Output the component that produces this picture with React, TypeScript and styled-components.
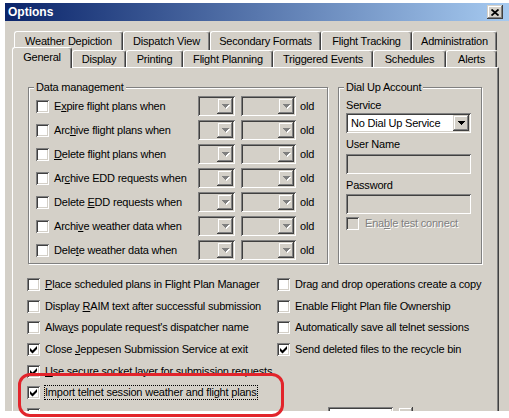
import React from 'react';
import styled, { createGlobalStyle, css } from 'styled-components';

const FACE = '#d4d0c8';

const raised = css`
  box-shadow: inset -1px -1px #404040, inset 1px 1px ${FACE}, inset -2px -2px #808080, inset 2px 2px #fff;
`;
const sunken = css`
  box-shadow: inset 1px 1px #808080, inset -1px -1px #fff, inset 2px 2px #404040, inset -2px -2px ${FACE};
`;

const BACK_TABS = [
  { label: 'Weather Depiction', width: 109 },
  { label: 'Dispatch View', width: 87 },
  { label: 'Secondary Formats', width: 111 },
  { label: 'Flight Tracking', width: 91 },
  { label: 'Administration', width: 85 },
];

const FRONT_TABS = [
  { label: 'General', width: 60, active: true },
  { label: 'Display', width: 54 },
  { label: 'Printing', width: 57 },
  { label: 'Flight Planning', width: 90 },
  { label: 'Triggered Events', width: 100 },
  { label: 'Schedules', width: 73 },
  { label: 'Alerts', width: 51 },
];

// '&' marks the accelerator letter, as in a Windows resource file
const DATA_ROWS = [
  'E&xpire flight plans when',
  'Arc&hive flight plans when',
  '&Delete flight plans when',
  'Ar&chive EDD requests when',
  'Delete &EDD requests when',
  'Archi&ve weather data when',
  'Dele&te weather data when',
];

type Opt = { label: string; checked?: boolean; focus?: boolean } | null;

const OPTIONS: [Opt, Opt][] = [
  [{ label: '&Place scheduled plans in Flight Plan Manager' }, { label: 'Drag and drop operations create a copy' }],
  [{ label: 'Display &RAIM text after successful submission' }, { label: 'Enable Flight Plan file Ownership' }],
  [{ label: "Alwa&ys populate request's dispatcher name" }, { label: 'Automatically save all telnet sessions' }],
  [{ label: 'Close &Jeppesen Submission Service at exit', checked: true }, { label: 'Send deleted files to the recycle bin', checked: true }],
  [{ label: '&Use secure socket layer for submission requests', checked: true }, null],
  [{ label: 'Import telnet session weather and flight plans', checked: true, focus: true }, null],
];

const Accel = ({ text }: { text: string }) => {
  const i = text.indexOf('&');
  if (i < 0) return <>{text}</>;
  return (
    <>
      {text.slice(0, i)}
      <u>{text[i + 1]}</u>
      {text.slice(i + 2)}
    </>
  );
};

const Arrow = ({ disabled }: { disabled?: boolean }) => {
  const d = 'M0 0h7v1H0z M1 1h5v1H1z M2 2h3v1H2z M3 3h1v1H3z';
  return (
    <svg width="8" height="5" viewBox="0 0 8 5">
      {disabled && <path d={d} fill="#fff" transform="translate(1 1)" />}
      <path d={d} fill={disabled ? '#808080' : '#000'} />
    </svg>
  );
};

const Check = () => (
  <svg width="13" height="13" viewBox="0 0 13 13">
    <path d="M3 5 L5.5 7.5 L10 3 L10 6 L5.5 10.5 L3 8 Z" fill="#000" />
  </svg>
);

function App() {
  return (
    <Page>
      <GlobalStyle />
      <Window>
        <TitleBar>
          <Title>Options</Title>
          <CloseButton>
            <svg width="8" height="7" viewBox="0 0 8 7">
              <path d="M0.5 0.5 L7.5 6.5 M7.5 0.5 L0.5 6.5" stroke="#000" strokeWidth="1.8" />
            </svg>
          </CloseButton>
        </TitleBar>

        <Body>
          <BackRow>
            {BACK_TABS.map(t => (
              <Tab key={t.label} $w={t.width} $h={19}>{t.label}</Tab>
            ))}
          </BackRow>
          <FrontRow>
            {FRONT_TABS.map(t => (
              <Tab key={t.label} $w={t.width} $h={t.active ? 21 : 17} $active={t.active}>{t.label}</Tab>
            ))}
          </FrontRow>

          <TabPage>
            <GroupsRow>
              <Group $w={300}>
                <GroupTitle>Data management</GroupTitle>
                {DATA_ROWS.map(row => (
                  <DataRow key={row}>
                    <Box />
                    <DataLabel><Accel text={row} /></DataLabel>
                    <Combo $w={37}>
                      <ComboText />
                      <DropButton><Arrow disabled /></DropButton>
                    </Combo>
                    <Combo $w={55} $gap={6}>
                      <ComboText />
                      <DropButton><Arrow disabled /></DropButton>
                    </Combo>
                    <Old>old</Old>
                  </DataRow>
                ))}
              </Group>

              <Group $w={144}>
                <GroupTitle>Dial Up Account</GroupTitle>
                <FieldLabel>Service</FieldLabel>
                <Combo $w={125} $enabled $mt={1}>
                  <ComboText>No Dial Up Service</ComboText>
                  <DropButton><Arrow /></DropButton>
                </Combo>
                <FieldLabel>User Name</FieldLabel>
                <Edit $w={125} $mt={3} />
                <FieldLabel>Password</FieldLabel>
                <Edit $w={125} $mt={2} />
                <CheckLine>
                  <Box $disabled />
                  <OptionText $disabled><Accel text="Ena&ble test connect" /></OptionText>
                </CheckLine>
              </Group>
            </GroupsRow>

            <OptionsGrid>
              {OPTIONS.map((pair, r) =>
                pair.map((o, c) => (
                  <Option key={`${r}-${c}`}>
                    {o && (
                      <>
                        <Box>{o.checked && <Check />}</Box>
                        <OptionText $focus={o.focus}><Accel text={o.label} /></OptionText>
                      </>
                    )}
                  </Option>
                ))
              )}
              <Option>
                <Box />
              </Option>
              <Option $top>
                <Edit $w={65} $white $ml={51} />
                <SpinButton />
              </Option>
            </OptionsGrid>
          </TabPage>
        </Body>
      </Window>

      <Highlight />
    </Page>
  );
}

export default App;

const GlobalStyle = createGlobalStyle`
  html, body {
    margin: 0;
    padding: 0;
    background: #fff;
    overflow: hidden;
  }
  body {
    font-family: "Liberation Sans", Arial, sans-serif;
    font-size: 11px;
    letter-spacing: -0.2px;
    color: #000;
  }
`;

const Page = styled.div`
position: relative;
width: 509px;
height: 418px;
overflow: hidden;
`;

const Window = styled.div`
margin: 3px 0 0 5px;
width: 504px;
height: 408px;
background: ${FACE};
overflow: hidden;
`;

const TitleBar = styled.div`
display: flex;
align-items: center;
justify-content: space-between;
height: 18px;
padding: 0 6px 0 3px;
background: linear-gradient(to right, #0a246a, #a6caf0);
`;

const Title = styled.span`
color: #fff;
font-weight: bold;
font-size: 12px;
letter-spacing: 0;
`;

const CloseButton = styled.span`
box-sizing: border-box;
display: flex;
align-items: center;
justify-content: center;
width: 16px;
height: 14px;
background: ${FACE};
${raised}
`;

const Body = styled.div`
padding: 10px 0 0 7px;
`;

const BackRow = styled.div`
display: flex;
height: 19px;
padding-left: 2px;
`;

const FrontRow = styled.div`
display: flex;
align-items: flex-start;
height: 17px;
`;

const Tab = styled.div<{ $w: number; $h: number; $active?: boolean }>`
box-sizing: border-box;
flex: none;
display: flex;
align-items: center;
justify-content: center;
width: ${p => p.$w}px;
height: ${p => p.$h}px;
background: ${FACE};
border-top: 1px solid #fff;
border-left: 1px solid #fff;
border-right: 1px solid #404040;
border-radius: 3px 3px 0 0;
box-shadow: inset -1px 0 #808080;
white-space: nowrap;

${p => p.$active && css`
  position: relative;
  z-index: 1;
  margin-top: -3px;
  padding-bottom: 2px;
`}
`;

const TabPage = styled.div`
box-sizing: border-box;
width: 487px;
height: 344px;
padding: 19px 0 0 15px;
border-top: 1px solid #fff;
border-left: 1px solid #fff;
border-right: 1px solid #404040;
box-shadow: inset -1px 0 #808080;
`;

const GroupsRow = styled.div`
display: flex;
align-items: stretch;
column-gap: 10px;
`;

const Group = styled.div<{ $w: number }>`
box-sizing: border-box;
display: flex;
flex-direction: column;
align-items: flex-start;
width: ${p => p.$w}px;
padding: 0 0 1px 7px;
border: 1px solid #808080;
box-shadow: inset 1px 1px #fff, 1px 1px #fff;
`;

const GroupTitle = styled.div`
margin: -7px 0 0 -2px;
padding: 0 2px;
line-height: 13px;
background: ${FACE};
`;

const DataRow = styled.div`
display: flex;
align-items: center;
height: 24px;
`;

const DataLabel = styled.span`
width: 144px;
margin-left: 5px;
white-space: nowrap;
`;

const Old = styled.span`
margin-left: 4px;
`;

const Box = styled.span<{ $disabled?: boolean }>`
box-sizing: border-box;
flex: none;
display: flex;
width: 13px;
height: 13px;
background: ${p => (p.$disabled ? FACE : '#fff')};
${sunken}
`;

const Combo = styled.div<{ $w: number; $enabled?: boolean; $gap?: number; $mt?: number }>`
box-sizing: border-box;
flex: none;
display: flex;
align-items: center;
width: ${p => p.$w}px;
height: 20px;
margin-left: ${p => p.$gap ?? 0}px;
margin-top: ${p => p.$mt ?? 0}px;
padding: 2px;
background: ${p => (p.$enabled ? '#fff' : FACE)};
${sunken}
`;

const ComboText = styled.span`
flex: 1;
padding-left: 3px;
white-space: nowrap;
`;

const DropButton = styled.span`
box-sizing: border-box;
flex: none;
display: flex;
align-items: center;
justify-content: center;
width: 16px;
height: 16px;
padding-left: 1px;
background: ${FACE};
${raised}
`;

const FieldLabel = styled.div`
margin-top: 5px;
line-height: 13px;
`;

const Edit = styled.div<{ $w: number; $mt?: number; $ml?: number; $white?: boolean }>`
box-sizing: border-box;
flex: none;
width: ${p => p.$w}px;
height: 20px;
margin-top: ${p => p.$mt ?? 0}px;
margin-left: ${p => p.$ml ?? 0}px;
background: ${p => (p.$white ? '#fff' : FACE)};
${sunken}
`;

const SpinButton = styled.div`
box-sizing: border-box;
width: 15px;
height: 20px;
background: ${FACE};
${raised}
`;

const CheckLine = styled.div`
display: flex;
align-items: center;
column-gap: 6px;
margin-top: 3px;
line-height: 13px;
`;

const OptionsGrid = styled.div`
display: grid;
grid-template-columns: 250px 1fr;
grid-auto-rows: 21.6px;
margin: 10px 0 0 -1px;
`;

const Option = styled.div<{ $top?: boolean }>`
display: flex;
align-items: ${p => (p.$top ? 'flex-start' : 'center')};
padding-top: ${p => (p.$top ? 3 : 0)}px;
column-gap: 5px;
white-space: nowrap;
`;

const OptionText = styled.span<{ $focus?: boolean; $disabled?: boolean }>`
line-height: 13px;
color: ${p => (p.$disabled ? '#808080' : '#000')};
text-shadow: ${p => (p.$disabled ? '1px 1px 0 #fff' : 'none')};

${p => p.$focus && css`
  margin-left: -1px;
  border: 1px dotted #000;
`}
`;

const Highlight = styled.div`
position: absolute;
left: 18px;
top: 373px;
box-sizing: border-box;
width: 266px;
height: 44px;
border: 3px solid #e2242b;
border-radius: 12px;
pointer-events: none;
`;
